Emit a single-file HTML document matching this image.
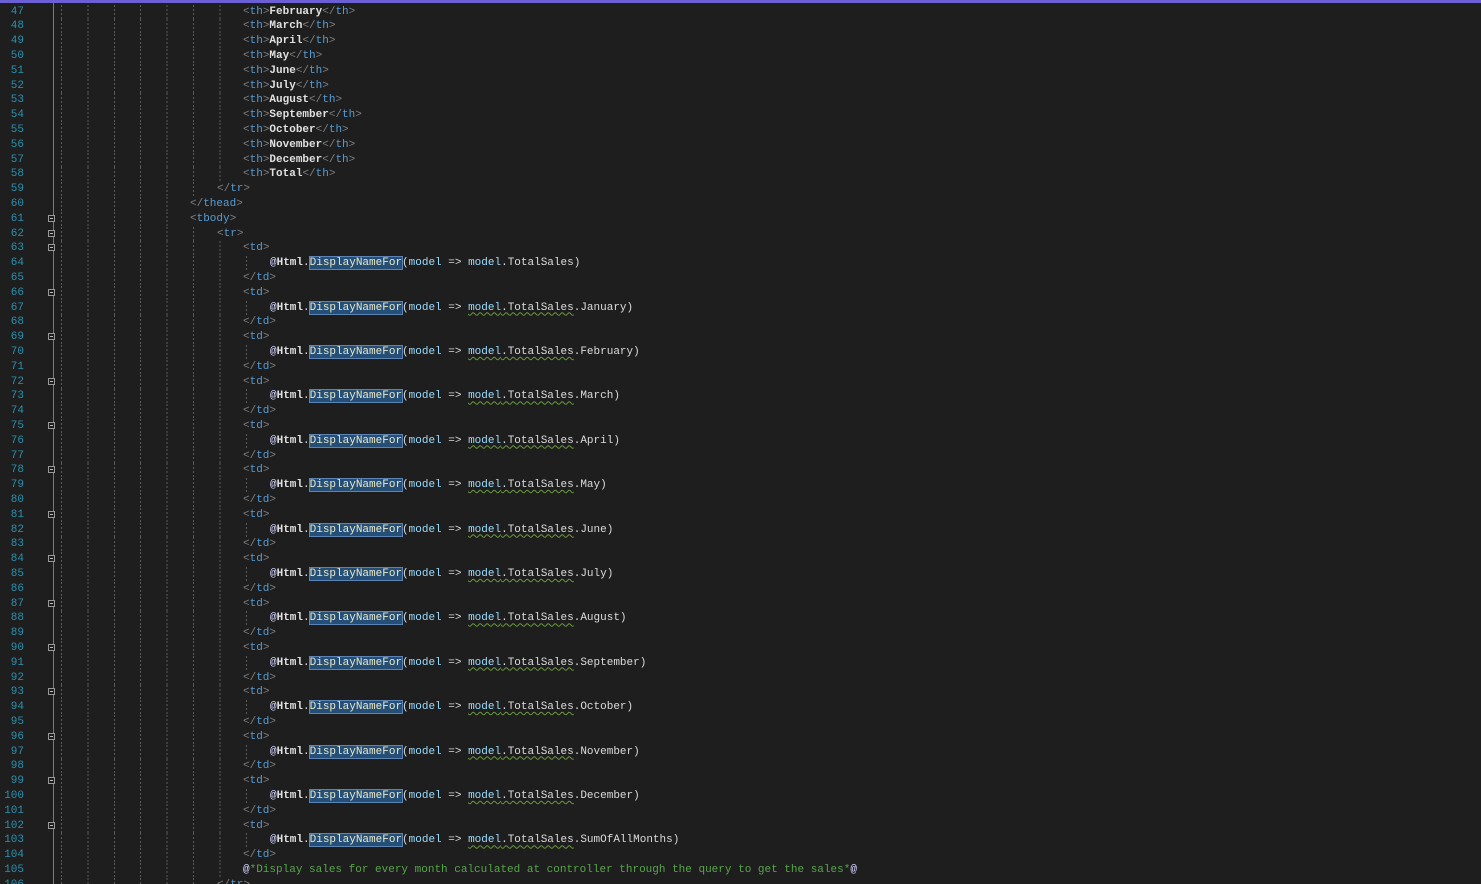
<!DOCTYPE html>
<html><head><meta charset="utf-8"><style>
html,body{margin:0;height:884px;overflow:hidden}
body{background:#1e1e1e;width:1481px;position:relative;font-family:"Liberation Mono",monospace;font-size:11px;}
.top{position:absolute;left:0;top:0;width:1481px;height:3px;background:#6a5fd3;}
.fold{position:absolute;left:53px;top:3px;width:1px;height:881px;background:#7a7a7a;}
.l{position:absolute;left:0;height:14.8px;line-height:14.8px;white-space:pre;color:#dcdcdc;width:1481px;margin-top:1.5px}
.n{position:absolute;left:0;width:24px;text-align:right;color:#2b91af;}
.g{position:absolute;left:61px;top:0;height:14.8px;background-image:repeating-linear-gradient(to bottom,transparent 0 2px,#1e1e1e 2px 4px),repeating-linear-gradient(to right,#5a5a5a 0 1px,transparent 1px 26.4px);}
.c{position:absolute;top:0;}
.b{color:#808080}.t{color:#569cd6}.w{color:#e0e0e0;font-weight:bold}
.at{color:#c8c8f0;font-weight:bold}.h{color:#e0e0e0;font-weight:bold}
.sel{background:#264f78;outline:1px solid #5b84b5;color:#e8e8c8}
.p{color:#9cdcfe}.sq{text-decoration:underline wavy #6a9b3f;text-underline-offset:2px;text-decoration-thickness:1px}
.cm{color:#57a64a}
.box{position:absolute;left:48px;top:3px;width:7px;height:7px;border:1px solid #999;background:#1e1e1e;box-sizing:border-box}
.box:after{content:"";position:absolute;left:1px;top:2px;width:3px;height:1px;background:#bbb}
</style></head><body>
<div class="top"></div>
<div class="fold"></div>

<div class="l" style="top:3px"><span class="n">47</span><span class="g" style="width:185px"></span><span class="c" style="left:243px"><span class="b">&lt;</span><span class="t">th</span><span class="b">&gt;</span><span class="w">February</span><span class="b">&lt;/</span><span class="t">th</span><span class="b">&gt;</span></span></div>
<div class="l" style="top:17.8px"><span class="n">48</span><span class="g" style="width:185px"></span><span class="c" style="left:243px"><span class="b">&lt;</span><span class="t">th</span><span class="b">&gt;</span><span class="w">March</span><span class="b">&lt;/</span><span class="t">th</span><span class="b">&gt;</span></span></div>
<div class="l" style="top:32.6px"><span class="n">49</span><span class="g" style="width:185px"></span><span class="c" style="left:243px"><span class="b">&lt;</span><span class="t">th</span><span class="b">&gt;</span><span class="w">April</span><span class="b">&lt;/</span><span class="t">th</span><span class="b">&gt;</span></span></div>
<div class="l" style="top:47.4px"><span class="n">50</span><span class="g" style="width:185px"></span><span class="c" style="left:243px"><span class="b">&lt;</span><span class="t">th</span><span class="b">&gt;</span><span class="w">May</span><span class="b">&lt;/</span><span class="t">th</span><span class="b">&gt;</span></span></div>
<div class="l" style="top:62.2px"><span class="n">51</span><span class="g" style="width:185px"></span><span class="c" style="left:243px"><span class="b">&lt;</span><span class="t">th</span><span class="b">&gt;</span><span class="w">June</span><span class="b">&lt;/</span><span class="t">th</span><span class="b">&gt;</span></span></div>
<div class="l" style="top:77px"><span class="n">52</span><span class="g" style="width:185px"></span><span class="c" style="left:243px"><span class="b">&lt;</span><span class="t">th</span><span class="b">&gt;</span><span class="w">July</span><span class="b">&lt;/</span><span class="t">th</span><span class="b">&gt;</span></span></div>
<div class="l" style="top:91.8px"><span class="n">53</span><span class="g" style="width:185px"></span><span class="c" style="left:243px"><span class="b">&lt;</span><span class="t">th</span><span class="b">&gt;</span><span class="w">August</span><span class="b">&lt;/</span><span class="t">th</span><span class="b">&gt;</span></span></div>
<div class="l" style="top:106.6px"><span class="n">54</span><span class="g" style="width:185px"></span><span class="c" style="left:243px"><span class="b">&lt;</span><span class="t">th</span><span class="b">&gt;</span><span class="w">September</span><span class="b">&lt;/</span><span class="t">th</span><span class="b">&gt;</span></span></div>
<div class="l" style="top:121.4px"><span class="n">55</span><span class="g" style="width:185px"></span><span class="c" style="left:243px"><span class="b">&lt;</span><span class="t">th</span><span class="b">&gt;</span><span class="w">October</span><span class="b">&lt;/</span><span class="t">th</span><span class="b">&gt;</span></span></div>
<div class="l" style="top:136.2px"><span class="n">56</span><span class="g" style="width:185px"></span><span class="c" style="left:243px"><span class="b">&lt;</span><span class="t">th</span><span class="b">&gt;</span><span class="w">November</span><span class="b">&lt;/</span><span class="t">th</span><span class="b">&gt;</span></span></div>
<div class="l" style="top:151px"><span class="n">57</span><span class="g" style="width:185px"></span><span class="c" style="left:243px"><span class="b">&lt;</span><span class="t">th</span><span class="b">&gt;</span><span class="w">December</span><span class="b">&lt;/</span><span class="t">th</span><span class="b">&gt;</span></span></div>
<div class="l" style="top:165.8px"><span class="n">58</span><span class="g" style="width:185px"></span><span class="c" style="left:243px"><span class="b">&lt;</span><span class="t">th</span><span class="b">&gt;</span><span class="w">Total</span><span class="b">&lt;/</span><span class="t">th</span><span class="b">&gt;</span></span></div>
<div class="l" style="top:180.6px"><span class="n">59</span><span class="g" style="width:158px"></span><span class="c" style="left:217px"><span class="b">&lt;/</span><span class="t">tr</span><span class="b">&gt;</span></span></div>
<div class="l" style="top:195.4px"><span class="n">60</span><span class="g" style="width:132px"></span><span class="c" style="left:190px"><span class="b">&lt;/</span><span class="t">thead</span><span class="b">&gt;</span></span></div>
<div class="l" style="top:210.2px"><span class="n">61</span><span class="box"></span><span class="g" style="width:132px"></span><span class="c" style="left:190px"><span class="b">&lt;</span><span class="t">tbody</span><span class="b">&gt;</span></span></div>
<div class="l" style="top:225px"><span class="n">62</span><span class="box"></span><span class="g" style="width:158px"></span><span class="c" style="left:217px"><span class="b">&lt;</span><span class="t">tr</span><span class="b">&gt;</span></span></div>

<div class="l" style="top:239.8px"><span class="n">63</span><span class="box"></span><span class="g" style="width:185px"></span><span class="c" style="left:243px"><span class="b">&lt;</span><span class="t">td</span><span class="b">&gt;</span></span></div>
<div class="l" style="top:254.6px"><span class="n">64</span><span class="g" style="width:211px"></span><span class="c" style="left:270px"><span class="at">@</span><span class="h">Html</span>.<span class="sel">DisplayNameFor</span>(<span class="p">model</span> =&gt; <span class="p">model</span>.TotalSales)</span></div>
<div class="l" style="top:269.4px"><span class="n">65</span><span class="g" style="width:185px"></span><span class="c" style="left:243px"><span class="b">&lt;/</span><span class="t">td</span><span class="b">&gt;</span></span></div>

<div class="l" style="top:284.2px"><span class="n">66</span><span class="box"></span><span class="g" style="width:185px"></span><span class="c" style="left:243px"><span class="b">&lt;</span><span class="t">td</span><span class="b">&gt;</span></span></div>
<div class="l" style="top:299px"><span class="n">67</span><span class="g" style="width:211px"></span><span class="c" style="left:270px"><span class="at">@</span><span class="h">Html</span>.<span class="sel">DisplayNameFor</span>(<span class="p">model</span> =&gt; <span class="sq"><span class="p">model</span>.TotalSales</span>.January)</span></div>
<div class="l" style="top:313.8px"><span class="n">68</span><span class="g" style="width:185px"></span><span class="c" style="left:243px"><span class="b">&lt;/</span><span class="t">td</span><span class="b">&gt;</span></span></div>

<div class="l" style="top:328.6px"><span class="n">69</span><span class="box"></span><span class="g" style="width:185px"></span><span class="c" style="left:243px"><span class="b">&lt;</span><span class="t">td</span><span class="b">&gt;</span></span></div>
<div class="l" style="top:343.4px"><span class="n">70</span><span class="g" style="width:211px"></span><span class="c" style="left:270px"><span class="at">@</span><span class="h">Html</span>.<span class="sel">DisplayNameFor</span>(<span class="p">model</span> =&gt; <span class="sq"><span class="p">model</span>.TotalSales</span>.February)</span></div>
<div class="l" style="top:358.2px"><span class="n">71</span><span class="g" style="width:185px"></span><span class="c" style="left:243px"><span class="b">&lt;/</span><span class="t">td</span><span class="b">&gt;</span></span></div>

<div class="l" style="top:373px"><span class="n">72</span><span class="box"></span><span class="g" style="width:185px"></span><span class="c" style="left:243px"><span class="b">&lt;</span><span class="t">td</span><span class="b">&gt;</span></span></div>
<div class="l" style="top:387.8px"><span class="n">73</span><span class="g" style="width:211px"></span><span class="c" style="left:270px"><span class="at">@</span><span class="h">Html</span>.<span class="sel">DisplayNameFor</span>(<span class="p">model</span> =&gt; <span class="sq"><span class="p">model</span>.TotalSales</span>.March)</span></div>
<div class="l" style="top:402.6px"><span class="n">74</span><span class="g" style="width:185px"></span><span class="c" style="left:243px"><span class="b">&lt;/</span><span class="t">td</span><span class="b">&gt;</span></span></div>

<div class="l" style="top:417.4px"><span class="n">75</span><span class="box"></span><span class="g" style="width:185px"></span><span class="c" style="left:243px"><span class="b">&lt;</span><span class="t">td</span><span class="b">&gt;</span></span></div>
<div class="l" style="top:432.2px"><span class="n">76</span><span class="g" style="width:211px"></span><span class="c" style="left:270px"><span class="at">@</span><span class="h">Html</span>.<span class="sel">DisplayNameFor</span>(<span class="p">model</span> =&gt; <span class="sq"><span class="p">model</span>.TotalSales</span>.April)</span></div>
<div class="l" style="top:447px"><span class="n">77</span><span class="g" style="width:185px"></span><span class="c" style="left:243px"><span class="b">&lt;/</span><span class="t">td</span><span class="b">&gt;</span></span></div>

<div class="l" style="top:461.8px"><span class="n">78</span><span class="box"></span><span class="g" style="width:185px"></span><span class="c" style="left:243px"><span class="b">&lt;</span><span class="t">td</span><span class="b">&gt;</span></span></div>
<div class="l" style="top:476.6px"><span class="n">79</span><span class="g" style="width:211px"></span><span class="c" style="left:270px"><span class="at">@</span><span class="h">Html</span>.<span class="sel">DisplayNameFor</span>(<span class="p">model</span> =&gt; <span class="sq"><span class="p">model</span>.TotalSales</span>.May)</span></div>
<div class="l" style="top:491.4px"><span class="n">80</span><span class="g" style="width:185px"></span><span class="c" style="left:243px"><span class="b">&lt;/</span><span class="t">td</span><span class="b">&gt;</span></span></div>

<div class="l" style="top:506.2px"><span class="n">81</span><span class="box"></span><span class="g" style="width:185px"></span><span class="c" style="left:243px"><span class="b">&lt;</span><span class="t">td</span><span class="b">&gt;</span></span></div>
<div class="l" style="top:521px"><span class="n">82</span><span class="g" style="width:211px"></span><span class="c" style="left:270px"><span class="at">@</span><span class="h">Html</span>.<span class="sel">DisplayNameFor</span>(<span class="p">model</span> =&gt; <span class="sq"><span class="p">model</span>.TotalSales</span>.June)</span></div>
<div class="l" style="top:535.8px"><span class="n">83</span><span class="g" style="width:185px"></span><span class="c" style="left:243px"><span class="b">&lt;/</span><span class="t">td</span><span class="b">&gt;</span></span></div>

<div class="l" style="top:550.6px"><span class="n">84</span><span class="box"></span><span class="g" style="width:185px"></span><span class="c" style="left:243px"><span class="b">&lt;</span><span class="t">td</span><span class="b">&gt;</span></span></div>
<div class="l" style="top:565.4px"><span class="n">85</span><span class="g" style="width:211px"></span><span class="c" style="left:270px"><span class="at">@</span><span class="h">Html</span>.<span class="sel">DisplayNameFor</span>(<span class="p">model</span> =&gt; <span class="sq"><span class="p">model</span>.TotalSales</span>.July)</span></div>
<div class="l" style="top:580.2px"><span class="n">86</span><span class="g" style="width:185px"></span><span class="c" style="left:243px"><span class="b">&lt;/</span><span class="t">td</span><span class="b">&gt;</span></span></div>

<div class="l" style="top:595px"><span class="n">87</span><span class="box"></span><span class="g" style="width:185px"></span><span class="c" style="left:243px"><span class="b">&lt;</span><span class="t">td</span><span class="b">&gt;</span></span></div>
<div class="l" style="top:609.8px"><span class="n">88</span><span class="g" style="width:211px"></span><span class="c" style="left:270px"><span class="at">@</span><span class="h">Html</span>.<span class="sel">DisplayNameFor</span>(<span class="p">model</span> =&gt; <span class="sq"><span class="p">model</span>.TotalSales</span>.August)</span></div>
<div class="l" style="top:624.6px"><span class="n">89</span><span class="g" style="width:185px"></span><span class="c" style="left:243px"><span class="b">&lt;/</span><span class="t">td</span><span class="b">&gt;</span></span></div>

<div class="l" style="top:639.4px"><span class="n">90</span><span class="box"></span><span class="g" style="width:185px"></span><span class="c" style="left:243px"><span class="b">&lt;</span><span class="t">td</span><span class="b">&gt;</span></span></div>
<div class="l" style="top:654.2px"><span class="n">91</span><span class="g" style="width:211px"></span><span class="c" style="left:270px"><span class="at">@</span><span class="h">Html</span>.<span class="sel">DisplayNameFor</span>(<span class="p">model</span> =&gt; <span class="sq"><span class="p">model</span>.TotalSales</span>.September)</span></div>
<div class="l" style="top:669px"><span class="n">92</span><span class="g" style="width:185px"></span><span class="c" style="left:243px"><span class="b">&lt;/</span><span class="t">td</span><span class="b">&gt;</span></span></div>

<div class="l" style="top:683.8px"><span class="n">93</span><span class="box"></span><span class="g" style="width:185px"></span><span class="c" style="left:243px"><span class="b">&lt;</span><span class="t">td</span><span class="b">&gt;</span></span></div>
<div class="l" style="top:698.6px"><span class="n">94</span><span class="g" style="width:211px"></span><span class="c" style="left:270px"><span class="at">@</span><span class="h">Html</span>.<span class="sel">DisplayNameFor</span>(<span class="p">model</span> =&gt; <span class="sq"><span class="p">model</span>.TotalSales</span>.October)</span></div>
<div class="l" style="top:713.4px"><span class="n">95</span><span class="g" style="width:185px"></span><span class="c" style="left:243px"><span class="b">&lt;/</span><span class="t">td</span><span class="b">&gt;</span></span></div>

<div class="l" style="top:728.2px"><span class="n">96</span><span class="box"></span><span class="g" style="width:185px"></span><span class="c" style="left:243px"><span class="b">&lt;</span><span class="t">td</span><span class="b">&gt;</span></span></div>
<div class="l" style="top:743px"><span class="n">97</span><span class="g" style="width:211px"></span><span class="c" style="left:270px"><span class="at">@</span><span class="h">Html</span>.<span class="sel">DisplayNameFor</span>(<span class="p">model</span> =&gt; <span class="sq"><span class="p">model</span>.TotalSales</span>.November)</span></div>
<div class="l" style="top:757.8px"><span class="n">98</span><span class="g" style="width:185px"></span><span class="c" style="left:243px"><span class="b">&lt;/</span><span class="t">td</span><span class="b">&gt;</span></span></div>

<div class="l" style="top:772.6px"><span class="n">99</span><span class="box"></span><span class="g" style="width:185px"></span><span class="c" style="left:243px"><span class="b">&lt;</span><span class="t">td</span><span class="b">&gt;</span></span></div>
<div class="l" style="top:787.4px"><span class="n">100</span><span class="g" style="width:211px"></span><span class="c" style="left:270px"><span class="at">@</span><span class="h">Html</span>.<span class="sel">DisplayNameFor</span>(<span class="p">model</span> =&gt; <span class="sq"><span class="p">model</span>.TotalSales</span>.December)</span></div>
<div class="l" style="top:802.2px"><span class="n">101</span><span class="g" style="width:185px"></span><span class="c" style="left:243px"><span class="b">&lt;/</span><span class="t">td</span><span class="b">&gt;</span></span></div>

<div class="l" style="top:817px"><span class="n">102</span><span class="box"></span><span class="g" style="width:185px"></span><span class="c" style="left:243px"><span class="b">&lt;</span><span class="t">td</span><span class="b">&gt;</span></span></div>
<div class="l" style="top:831.8px"><span class="n">103</span><span class="g" style="width:211px"></span><span class="c" style="left:270px"><span class="at">@</span><span class="h">Html</span>.<span class="sel">DisplayNameFor</span>(<span class="p">model</span> =&gt; <span class="sq"><span class="p">model</span>.TotalSales</span>.SumOfAllMonths)</span></div>
<div class="l" style="top:846.6px"><span class="n">104</span><span class="g" style="width:185px"></span><span class="c" style="left:243px"><span class="b">&lt;/</span><span class="t">td</span><span class="b">&gt;</span></span></div>
<div class="l" style="top:861.4px"><span class="n">105</span><span class="g" style="width:185px"></span><span class="c" style="left:243px"><span class="at">@</span><span class="cm">*Display sales for every month calculated at controller through the query to get the sales*</span><span class="at">@</span></span></div>
<div class="l" style="top:876.2px"><span class="n">106</span><span class="g" style="width:158px"></span><span class="c" style="left:217px"><span class="b">&lt;/</span><span class="t">tr</span><span class="b">&gt;</span></span></div>
</body></html>
